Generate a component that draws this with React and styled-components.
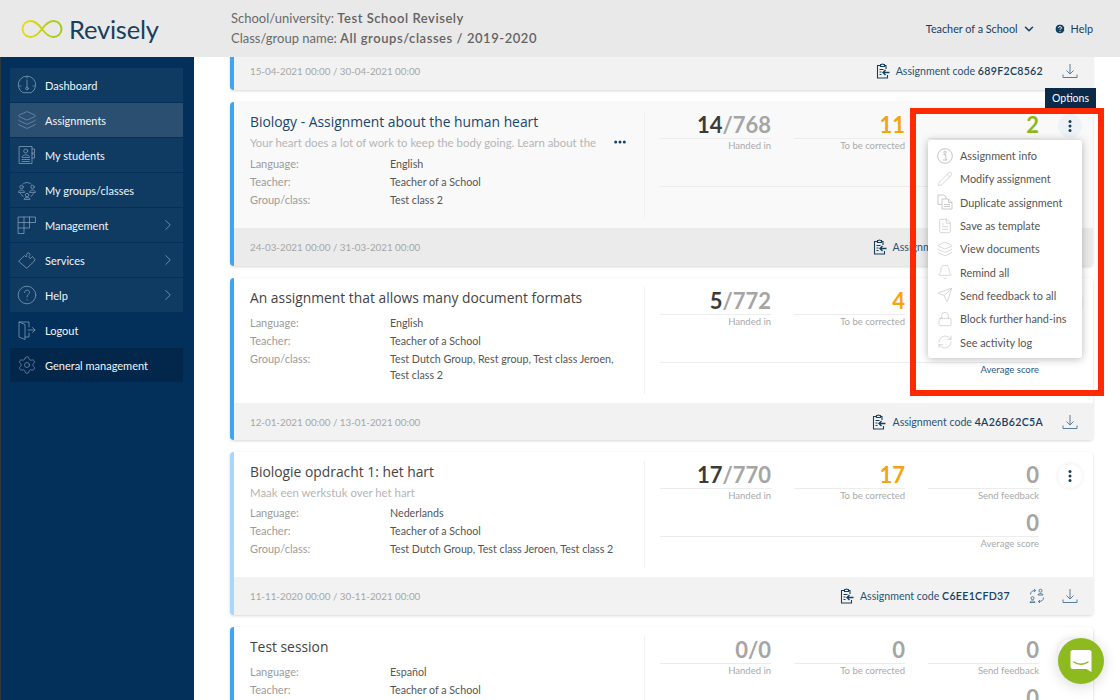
import React from 'react';
import styled, { createGlobalStyle } from 'styled-components';
import {
  Bell, ChevronDown, ChevronRight, CircleHelp, FileText, Layers, Lock, Pencil, RefreshCw, Send, Settings,
} from 'lucide-react';

const GlobalStyle = createGlobalStyle`
  html, body { margin: 0; padding: 0; height: 100%; }
  body { font-family: Lato, "Liberation Sans", sans-serif; background: #fff; overflow: hidden; }
  * { box-sizing: border-box; }
`;

const Page = styled.div`
  position: relative;
  width: 1120px;
  height: 700px;
  overflow: hidden;
  display: flex;
  flex-direction: column;
`;

const Header = styled.header`
  flex: 0 0 57px;
  background: #e9e9e9;
  display: flex;
  align-items: center;
`;

const Logo = styled.div`
  width: 231px;
  padding-left: 21px;
  display: flex;
  align-items: center;
  gap: 6px;
  color: #17405f;
  font-size: 25.5px;
  font-weight: 400;
  letter-spacing: -0.2px;
`;

const SchoolInfo = styled.div`
  flex: 1;
  padding-bottom: 2px;
  font-size: 13px;
  line-height: 20px;
  color: #6a6a6a;
  b { font-weight: 600; letter-spacing: 0.55px; color: #636363; }
`;

const UserMenu = styled.div`
  display: flex;
  align-items: center;
  color: #17405f;
  font-size: 10.8px;
  padding-right: 27px;
  span { margin-right: 4px; }
`;

const HelpLink = styled.div`
  margin-left: 18px;
  display: flex;
  align-items: center;
  gap: 5px;
`;

const Body = styled.div`
  flex: 1;
  display: flex;
  min-height: 0;
`;

const Sidebar = styled.nav`
  flex: 0 0 194px;
  background: #03305a;
  border-left: 1px solid #30383f;
  padding: 11px 11px 0 9px;
  display: flex;
  flex-direction: column;
  gap: 1px;
`;

const NavItem = styled.div`
  height: 34px;
  display: flex;
  align-items: center;
  padding: 0 6px 0 7px;
  color: #f2f5f8;
  font-size: 11px;
  background: ${(p) => ({ active: '#2b4f71', plain: 'transparent', dark: '#03274b' }[p.$kind] || '#0f3b63')};
  svg.icon { flex: 0 0 20px; margin-right: 8px; color: #7f9ab3; }
  svg.arrow { margin-left: auto; color: #8ba3b9; }
`;

const Main = styled.main`
  flex: 1;
  min-width: 0;
  overflow: hidden;
  padding: 0 27px 0 36px;
  display: flex;
  flex-direction: column;
  gap: 12px;
`;

const Card = styled.section`
  position: relative;
  flex: 0 0 auto;
  border-left: 4px solid ${(p) => (p.$faded ? '#a9d6fb' : '#3da5f6')};
  border-radius: 4px;
  background: ${(p) => (p.$open ? '#f9f9f9' : '#fff')};
  box-shadow: 0 1px 3px rgba(0, 0, 0, 0.16);
`;

// the list is scrolled, so the first card only shows the bottom of its footer
const ScrolledCard = styled(Card)`
  margin-top: -6px;
`;

const CardBody = styled.div`
  display: flex;
  height: ${(p) => p.$height}px;
`;

const Info = styled.div`
  flex: 0 0 411px;
  margin: 9px 0;
  padding: 0 16px;
  border-right: 1px solid #f1f1f1;
`;

const Title = styled.h3`
  margin: 0;
  font-size: 13.85px;
  line-height: 22px;
  font-weight: 400;
  font-family: "Open Sans", Lato, sans-serif;
  color: ${(p) => (p.$link ? '#17466f' : '#444')};
`;

const Description = styled.div`
  display: flex;
  align-items: center;
  height: 18px;
  font-size: 11.4px;
  color: #b5b5b5;
  white-space: nowrap;
  svg { margin-left: 17px; flex: none; }
`;

const Clipped = styled.span`
  width: 347px;
  overflow: hidden;
`;

const Meta = styled.dl`
  margin: ${(p) => p.$gap}px 0 0;
  display: grid;
  grid-template-columns: 140px 1fr;
  row-gap: 2px;
  line-height: 16px;
  dt { color: #9b9b9b; font-size: 11px; }
  dd { margin: 0; color: #555; font-size: 10.7px; }
`;

const Stats = styled.div`
  flex: 0 0 379px;
  margin-left: 15px;
  padding-top: 9px;
  display: grid;
  grid-template-columns: repeat(3, 1fr);
  grid-auto-rows: 48px;
  column-gap: 23px;
`;

const Stat = styled.div`
  grid-column: ${(p) => (p.$wide ? '1 / -1' : 'auto')};
  text-align: right;
`;

const Value = styled.div`
  height: 28px;
  line-height: 28px;
  font-size: 22px;
  font-weight: 700;
  color: ${(p) => p.$color || '#a5a5a5'};
  border-bottom: 1px solid #ececec;
  b { color: #3b3b3b; font-weight: 700; }
  i { font-style: normal; color: #a5a5a5; }
`;

const StatLabel = styled.div`
  font-size: 9.5px;
  line-height: 13px;
  color: ${(p) => p.$color || '#a9a9a9'};
`;

const OptionsCell = styled.div`
  position: relative;
  margin: 12px 0 0 19px;
  width: 24px;
  height: 24px;
`;

const DotsButton = styled.div`
  width: 24px;
  height: 24px;
  border-radius: 50%;
  display: flex;
  align-items: center;
  justify-content: center;
  background: ${(p) => (p.$open ? '#eef1f6' : '#fff')};
  box-shadow: ${(p) => (p.$open ? 'none' : '0 0 4px rgba(0, 0, 0, 0.09)')};
`;

const Tooltip = styled.div`
  position: absolute;
  left: -13px;
  top: -26px;
  width: 51px;
  height: 21px;
  background: #0b2a49;
  color: #fff;
  font-size: 10.5px;
  line-height: 21px;
  text-align: center;
`;

const Menu = styled.div`
  position: absolute;
  z-index: 3;
  right: 0;
  top: 26px;
  width: 154px;
  height: 218px;
  padding: 4px 0;
  background: #fff;
  border-radius: 3px;
  box-shadow: 0 1px 8px rgba(0, 0, 0, 0.28);
`;

const MenuRow = styled.div`
  height: 23.3px;
  display: flex;
  align-items: center;
  padding-left: 9px;
  gap: 7px;
  font-size: 10.9px;
  color: #555;
  white-space: nowrap;
  svg { flex: 0 0 16px; color: #bdbdbd; }
`;

const RedFrame = styled.div`
  position: absolute;
  z-index: 4;
  left: 910px;
  top: 108px;
  width: 194px;
  height: 288px;
  border: 6px solid #ff2a00;
  pointer-events: none;
`;

const Footer = styled.div`
  height: ${(p) => p.$height}px;
  padding: 0 15px 0 16px;
  display: flex;
  align-items: center;
  border-radius: 0 0 4px 0;
  background: ${(p) => (p.$open ? '#ebebeb' : '#f2f2f2')};
`;

const Dates = styled.div`
  flex: 1;
  font-size: 9.8px;
  color: #a6a6a6;
`;

const Code = styled.div`
  display: flex;
  align-items: center;
  gap: 6px;
  font-size: 10.6px;
  color: #2a5276;
  b { color: #17405f; font-weight: 600; letter-spacing: 0.3px; }
  svg { color: #17405f; }
`;

const FooterIcon = styled.div`
  display: flex;
  margin-left: ${(p) => p.$gap}px;
  color: #46708f;
`;

const ChatBubble = styled.div`
  position: absolute;
  z-index: 5;
  right: 16px;
  bottom: 16px;
  width: 46px;
  height: 46px;
  border-radius: 50%;
  background: #8cba1f;
  box-shadow: 0 2px 14px rgba(0, 0, 0, 0.16);
  display: flex;
  align-items: center;
  justify-content: center;
`;

const Infinity = () => (
  <svg width="42" height="20" viewBox="0 0 42 20" fill="none">
    <defs>
      <linearGradient id="logoGrad" x1="0" x2="1" y1="0" y2="0">
        <stop offset="0" stopColor="#e8dc10" />
        <stop offset="1" stopColor="#a5c71e" />
      </linearGradient>
    </defs>
    <path
      d="M21 10C17 4.500 14 2 9.500 2 5 2 1.500 5.500 1.500 10s3.500 8 8 8c4.500 0 7.500-2.500 11.500-8s7-8 11.500-8 8 3.500 8 8-3.500 8-8 8c-4.500 0-7.500-2.500-11.500-8z"
      stroke="url(#logoGrad)"
      strokeWidth="1.900"
    />
  </svg>
);

const Line = ({ size = 20, children }) => (
  <svg className="icon" width={size} height={size} viewBox="0 0 20 20" fill="none" stroke="currentColor" strokeWidth="0.8" strokeLinecap="round" strokeLinejoin="round">
    {children}
  </svg>
);

const GaugeIcon = () => (
  <Line>
    <path d="M5.500 17.500a8.800 8.800 0 1 1 9 0z" />
    <path d="M10 5v7M10 1.500v1.500M2.500 11h1.500M16 11h1.500" />
    <circle cx="10" cy="13.500" r="1.300" />
  </Line>
);
const StudentsIcon = () => (
  <Line>
    <rect x="2.500" y="1.500" width="12.500" height="17" />
    <circle cx="8.700" cy="6" r="2" />
    <path d="M5 12c0-3 7.500-3 7.500 0zM5 14.500h7.500M5 16.500h7.500M15 4h2.500v4H15M15 9h2.500v4H15" />
  </Line>
);
const GroupsIcon = () => (
  <Line>
    <circle cx="4.500" cy="7" r="1.700" />
    <circle cx="15.500" cy="7" r="1.700" />
    <circle cx="10" cy="15" r="1.700" />
    <path d="M1.500 12c0-2.500 6-2.500 6 0zM12.500 12c0-2.500 6-2.500 6 0zM7 19c0-2 6-2 6 0zM6 4c2.500-2 5.500-2 8 0M3.500 13.500l2.500 3M16.500 13.500l-2.500 3" />
  </Line>
);
const GridIcon = () => (
  <Line>
    <path d="M1.500 2h17v5.500h-6V13h-5.500v5.500H1.500zM1.500 7.500h11M1.500 13h5.500M7 2v11M12.500 2v5.500" />
  </Line>
);
const PuzzleIcon = () => (
  <Line>
    <path d="M2 11l5.500-5.500 1.500 1.500c1.500-1 0-2.500 1-3.500s3-.5 3 1-1.500 1.500-1 3l1.500 1 2-2 2.500 3-1 2-7 6.500z" />
  </Line>
);
const QuestionIcon = () => (
  <Line>
    <circle cx="10" cy="10" r="8.800" />
    <path d="M7.500 7.500c0-3.300 5-3.300 5 0 0 2-2.500 2-2.500 4.500M10 14.700v.3" />
  </Line>
);
const DoorIcon = () => (
  <Line>
    <path d="M2 2v15l6 2.500V4.500L2 2h10v5M12 13v4H8M11 10h7M15.500 7.500 18 10l-2.500 2.500" />
  </Line>
);

const InfoCircle = () => (
  <svg width="16" height="16" viewBox="0 0 14 14" fill="none" stroke="currentColor" strokeWidth="0.8">
    <circle cx="7" cy="7" r="6.400" />
    <circle cx="7" cy="3.700" r="1" />
    <path d="M5.500 5.800h2.200v4.200h1M5.300 10.500h3.600" />
  </svg>
);

const DuplicateIcon = () => (
  <svg width="16" height="16" viewBox="0 0 16 16" fill="none" stroke="currentColor" strokeWidth="0.8">
    <path d="M1 1h6l2 2v2M1 1v9.500h3.500" />
    <path d="M5 5h6.500L15 8.500V15H5zM11.500 5v3.500H15M7 10.500h6M7 12.500h6" />
  </svg>
);

const ClipboardIcon = () => (
  <svg width="14" height="16" viewBox="0 0 14 16" fill="none" stroke="currentColor" strokeWidth="1.100">
    <path d="M4 2.500H1.500v12.500h10V12M10 6V2.500H8M4.500 3.500V1.500H5.500a1.200 1.200 0 0 1 2 0h1v2z" />
    <path d="M3.500 6.500h4M3.500 9h2M3.500 11.500h2" />
    <path d="M13.500 9.500H7M9.500 7 7 9.500 9.500 12" strokeWidth="1.400" />
  </svg>
);

const DownloadIcon = () => (
  <svg width="16" height="16" viewBox="0 0 16 16" fill="none" stroke="currentColor" strokeWidth="0.9">
    <path d="M8 1v10M4.500 7.500 8 11l3.500-3.500M1 11.500v3h14v-3" />
  </svg>
);

const SwapIcon = () => (
  <svg width="16" height="16" viewBox="0 0 16 16" fill="none" stroke="currentColor" strokeWidth="0.9">
    <circle cx="11.500" cy="2.700" r="1.500" />
    <path d="M9 7c0-2 5-2 5 0z" />
    <circle cx="3.500" cy="10.200" r="1.500" />
    <path d="M1 14.500c0-2 5-2 5 0z" />
    <path d="M1.500 6.500c0-2.500 1.500-4 5-4M5 1l1.700 1.500L5 4M14.500 9.500c0 2.500-1.500 4-5 4M11 12l-1.700 1.500L11 15" />
  </svg>
);

const VerticalDots = () => (
  <svg width="4" height="12" viewBox="0 0 4 12" fill="#17405f">
    <circle cx="2" cy="1.600" r="1.500" />
    <circle cx="2" cy="6" r="1.500" />
    <circle cx="2" cy="10.400" r="1.500" />
  </svg>
);

const HorizontalDots = () => (
  <svg width="12" height="4" viewBox="0 0 12 4" fill="#17405f">
    <circle cx="1.700" cy="2" r="1.500" />
    <circle cx="6" cy="2" r="1.500" />
    <circle cx="10.300" cy="2" r="1.500" />
  </svg>
);

const navItems = [
  { label: 'Dashboard', icon: <GaugeIcon /> },
  { label: 'Assignments', icon: <Layers className="icon" size={20} strokeWidth={0.8} />, kind: 'active' },
  { label: 'My students', icon: <StudentsIcon /> },
  { label: 'My groups/classes', icon: <GroupsIcon /> },
  { label: 'Management', icon: <GridIcon />, more: true },
  { label: 'Services', icon: <PuzzleIcon />, more: true },
  { label: 'Help', icon: <QuestionIcon />, more: true },
  { label: 'Logout', icon: <DoorIcon />, kind: 'plain' },
  { label: 'General management', icon: <Settings className="icon" size={20} strokeWidth={0.8} />, kind: 'dark' },
];

const menuItems = [
  { label: 'Assignment info', icon: <InfoCircle /> },
  { label: 'Modify assignment', icon: <Pencil size={16} strokeWidth={0.9} /> },
  { label: 'Duplicate assignment', icon: <DuplicateIcon /> },
  { label: 'Save as template', icon: <FileText size={16} strokeWidth={0.9} /> },
  { label: 'View documents', icon: <Layers size={16} strokeWidth={0.9} /> },
  { label: 'Remind all', icon: <Bell size={16} strokeWidth={0.9} /> },
  { label: 'Send feedback to all', icon: <Send size={16} strokeWidth={0.9} /> },
  { label: 'Block further hand-ins', icon: <Lock size={16} strokeWidth={0.9} /> },
  { label: 'See activity log', icon: <RefreshCw size={16} strokeWidth={0.9} /> },
];

const cards = [
  {
    id: 'biology',
    open: true,
    link: true,
    height: 126,
    footer: 38,
    metaGap: 5,
    title: 'Biology - Assignment about the human heart',
    description: 'Your heart does a lot of work to keep the body going. Learn about the heart and how',
    clipped: true,
    language: 'English',
    group: 'Test class 2',
    handed: '14',
    total: '768',
    toCorrect: '11',
    correctColor: '#f5a30f',
    feedback: '2',
    feedbackColor: '#8cb81e',
    average: '',
    dates: '24-03-2021 00:00 / 31-03-2021 00:00',
    code: 'A37B1D90E2',
  },
  {
    id: 'formats',
    height: 125,
    footer: 37,
    metaGap: 6,
    title: 'An assignment that allows many document formats',
    language: 'English',
    group: 'Test Dutch Group, Rest group, Test class Jeroen, Test class 2',
    handed: '5',
    total: '772',
    toCorrect: '4',
    correctColor: '#f5a30f',
    feedback: '1',
    feedbackColor: '#8cb81e',
    average: '7.3/10',
    averageColor: '#17466f',
    averageLabel: '#2a5a8a',
    dates: '12-01-2021 00:00 / 13-01-2021 00:00',
    code: '4A26B62C5A',
  },
  {
    id: 'biologie',
    faded: true,
    height: 125,
    footer: 38,
    metaGap: 4,
    title: 'Biologie opdracht 1: het hart',
    description: 'Maak een werkstuk over het hart',
    language: 'Nederlands',
    group: 'Test Dutch Group, Test class Jeroen, Test class 2',
    handed: '17',
    total: '770',
    toCorrect: '17',
    correctColor: '#f5a30f',
    feedback: '0',
    average: '0',
    dates: '11-11-2020 00:00 / 30-11-2021 00:00',
    code: 'C6EE1CFD37',
    swap: true,
  },
  {
    id: 'session',
    height: 125,
    footer: 38,
    metaGap: 6,
    title: 'Test session',
    language: 'Español',
    group: 'Test class 2',
    handed: '0',
    total: '0',
    muted: true,
    toCorrect: '0',
    feedback: '0',
    average: '0',
    dates: '',
    code: '',
  },
];

const CardFooter = ({ dates, code, swap, open, height }) => (
  <Footer $open={open} $height={height}>
    <Dates>{dates}</Dates>
    <Code>
      <ClipboardIcon />
      <span>
        Assignment code <b>{code}</b>
      </span>
    </Code>
    {swap && <FooterIcon $gap={19}><SwapIcon /></FooterIcon>}
    <FooterIcon $gap={swap ? 17 : 19}><DownloadIcon /></FooterIcon>
  </Footer>
);

const AssignmentCard = ({ card }) => (
  <Card $open={card.open} $faded={card.faded}>
    <CardBody $height={card.height}>
      <Info>
        <Title $link={card.link}>{card.title}</Title>
        {card.description && (
          <Description>
            {card.clipped ? <Clipped>{card.description}</Clipped> : card.description}
            {card.clipped && <HorizontalDots />}
          </Description>
        )}
        <Meta $gap={card.metaGap}>
          <dt>Language:</dt>
          <dd>{card.language}</dd>
          <dt>Teacher:</dt>
          <dd>Teacher of a School</dd>
          <dt>Group/class:</dt>
          <dd>{card.group}</dd>
        </Meta>
      </Info>
      <Stats>
        <Stat>
          <Value>
            {card.muted ? card.handed : <b>{card.handed}</b>}
            <i>/{card.total}</i>
          </Value>
          <StatLabel>Handed in</StatLabel>
        </Stat>
        <Stat>
          <Value $color={card.correctColor}>{card.toCorrect}</Value>
          <StatLabel>To be corrected</StatLabel>
        </Stat>
        <Stat>
          <Value $color={card.feedbackColor}>{card.feedback}</Value>
          <StatLabel>Send feedback</StatLabel>
        </Stat>
        <Stat $wide>
          <Value $color={card.averageColor}>{card.average}</Value>
          <StatLabel $color={card.averageLabel}>Average score</StatLabel>
        </Stat>
      </Stats>
      <OptionsCell>
        <DotsButton $open={card.open}><VerticalDots /></DotsButton>
        {card.open && (
          <>
            <Tooltip>Options</Tooltip>
            <Menu>
              {menuItems.map((item) => (
                <MenuRow key={item.label}>
                  {item.icon}
                  {item.label}
                </MenuRow>
              ))}
            </Menu>
          </>
        )}
      </OptionsCell>
    </CardBody>
    <CardFooter dates={card.dates} code={card.code} swap={card.swap} open={card.open} height={card.footer} />
  </Card>
);

const App = () => (
  <Page>
    <GlobalStyle />
    <Header>
      <Logo>
        <Infinity />
        Revisely
      </Logo>
      <SchoolInfo>
        <div>School/university: <b>Test School Revisely</b></div>
        <div>Class/group name: <b>All groups/classes / 2019-2020</b></div>
      </SchoolInfo>
      <UserMenu>
        <span>Teacher of a School</span>
        <ChevronDown size={14} strokeWidth={2.6} />
        <HelpLink>
          <CircleHelp size={12} fill="#17405f" color="#fff" strokeWidth={2} />
          Help
        </HelpLink>
      </UserMenu>
    </Header>
    <Body>
      <Sidebar>
        {navItems.map((item) => (
          <NavItem key={item.label} $kind={item.kind}>
            {item.icon}
            {item.label}
            {item.more && <ChevronRight className="arrow" size={18} strokeWidth={1} />}
          </NavItem>
        ))}
      </Sidebar>
      <Main>
        <ScrolledCard>
          <CardFooter dates="15-04-2021 00:00 / 30-04-2021 00:00" code="689F2C8562" height={39} />
        </ScrolledCard>
        {cards.map((card) => <AssignmentCard key={card.id} card={card} />)}
      </Main>
    </Body>
    <RedFrame />
    <ChatBubble>
      <svg width="22" height="24" viewBox="0 0 22 24">
        <path d="M3 1h16a2.500 2.500 0 0 1 2.500 2.500V23l-5-3H3A2.500 2.500 0 0 1 .5 17.500v-14A2.500 2.500 0 0 1 3 1z" fill="#fff" />
        <path d="M4 13c4 3 10 3 14 0" fill="none" stroke="#8cba1f" strokeWidth="1.500" strokeLinecap="round" />
      </svg>
    </ChatBubble>
  </Page>
);

export default App;
